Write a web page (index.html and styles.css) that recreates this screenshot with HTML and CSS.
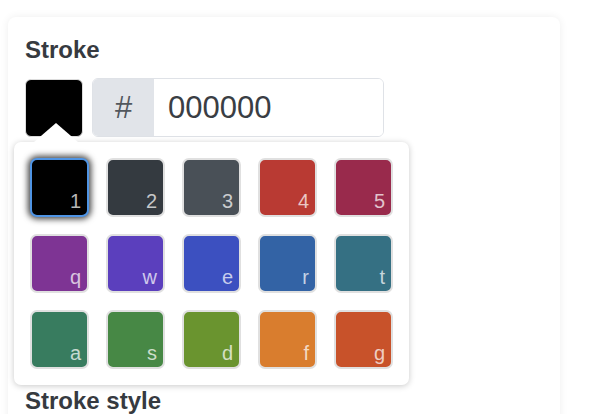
FILE: index.html
```html
<!DOCTYPE html>
<html lang="en">
<head>
  <meta charset="UTF-8" />
  <title>Stroke picker</title>
  <link rel="stylesheet" href="styles.css">
</head>
<body>
  <div class="panel">
    <h3 class="label">Stroke</h3>

    <div class="picker">
      <button class="current" style="background:#000000"></button>
      <div class="hex">
        <span class="hex-prefix">#</span>
        <input class="hex-input" type="text" value="000000" />
      </div>

      <div class="popover">
        <span class="arrow"></span>
        <div class="swatches">
          <button class="swatch active" style="background:#000000"><span>1</span></button>
          <button class="swatch" style="background:#343a40"><span>2</span></button>
          <button class="swatch" style="background:#495057"><span>3</span></button>
          <button class="swatch" style="background:#b93a33"><span>4</span></button>
          <button class="swatch" style="background:#992a4c"><span>5</span></button>
          <button class="swatch" style="background:#7e3494"><span>q</span></button>
          <button class="swatch" style="background:#5b3fbd"><span>w</span></button>
          <button class="swatch" style="background:#3c50c0"><span>e</span></button>
          <button class="swatch" style="background:#3363a5"><span>r</span></button>
          <button class="swatch" style="background:#357083"><span>t</span></button>
          <button class="swatch" style="background:#387c5f"><span>a</span></button>
          <button class="swatch" style="background:#478845"><span>s</span></button>
          <button class="swatch" style="background:#6a942f"><span>d</span></button>
          <button class="swatch" style="background:#d97d2e"><span>f</span></button>
          <button class="swatch" style="background:#c8522a"><span>g</span></button>
        </div>
      </div>
    </div>

    <h3 class="label label-next">Stroke style</h3>
  </div>
</body>
</html>
```

FILE: styles.css
```css
* {
  box-sizing: border-box;
}

body {
  margin: 0;
  background: #fff;
  font-family: "Liberation Sans", Arial, sans-serif;
  overflow: hidden;
}

.panel {
  margin: 17px 0 0 8px;
  width: 552px;
  min-height: 460px;
  padding: 19px 17px 0 17px;
  background: #fff;
  border-radius: 8px;
  box-shadow: 0 0 8px rgb(0 0 0 / 0.07);
}

.label {
  margin: 0;
  font-size: 24px;
  line-height: 28px;
  font-weight: 700;
  color: #363a40;
}

.picker {
  position: relative;
  display: flex;
  align-items: center;
  gap: 9px;
  margin-top: 14px;
  height: 59px;
}

.current {
  width: 58px;
  height: 58px;
  padding: 0;
  border: 1px solid #dcdcdc;
  border-radius: 6px;
  cursor: pointer;
}

.hex {
  display: flex;
  width: 292px;
  height: 59px;
  border: 1.5px solid #dfe2e7;
  border-radius: 6px;
  overflow: hidden;
}

.hex-prefix {
  width: 61px;
  display: flex;
  align-items: center;
  justify-content: center;
  background: #e1e4e9;
  color: #52575d;
  font-size: 31px;
}

.hex-input {
  flex: 1;
  min-width: 0;
  border: none;
  outline: none;
  padding: 0 0 0 14px;
  font-family: inherit;
  font-size: 31px;
  color: #3a3e44;
  background: #fff;
}

.popover {
  position: absolute;
  top: 64px;
  left: -11px;
  padding: 16px;
  background: #fff;
  border-radius: 7px;
  box-shadow: 0 1px 6px rgb(0 0 0 / 0.22);
  z-index: 2;
}

.arrow {
  position: absolute;
  top: -19px;
  left: 20px;
  width: 0;
  height: 0;
  border-left: 22px solid transparent;
  border-right: 22px solid transparent;
  border-bottom: 19px solid #fff;
}

.swatches {
  display: grid;
  grid-template-columns: repeat(5, 59px);
  grid-auto-rows: 59px;
  gap: 17px;
}

.swatch {
  position: relative;
  padding: 0;
  border: 2px solid #e0e0e0;
  border-radius: 7px;
  cursor: pointer;
}

.swatch span {
  position: absolute;
  right: 6px;
  bottom: 4px;
  font-family: "Liberation Sans", Arial, sans-serif;
  font-size: 20px;
  line-height: 20px;
  color: rgb(255 255 255 / 0.72);
}

.swatch.active {
  border-color: #4f94e4;
  box-shadow: 0 0 6px 2px rgb(0 0 0 / 0.75);
}

.label-next {
  margin-top: 250px;
}
```
